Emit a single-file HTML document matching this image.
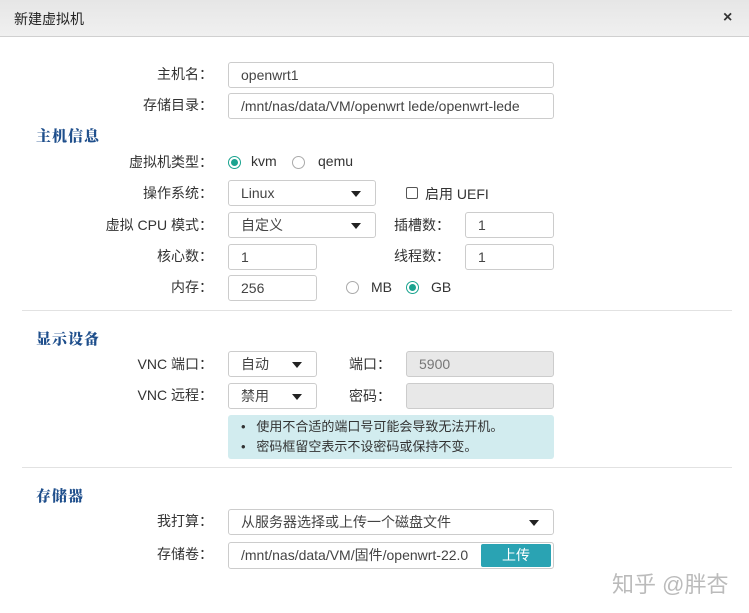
<!DOCTYPE html>
<html><head><meta charset="utf-8"><style>
*{box-sizing:border-box;margin:0;padding:0}
body{width:749px;height:613px;background:#fff;position:relative;overflow:hidden;font-family:"Liberation Sans","Noto Sans CJK SC",sans-serif;font-size:14px;color:#333}
.hdr{position:absolute;left:0;top:0;width:749px;height:37px;background:linear-gradient(#e6e6e6,#f0f0f0);border-bottom:1px solid #d0d0d0}
.hdr .t{position:absolute;left:14px;top:9px;font-size:14px;color:#222}
.hdr .x{position:absolute;left:723px;top:9px;font-size:16px;font-weight:bold;color:#333}
.a{position:absolute}
.lbl{position:absolute;text-align:right;width:200px;left:13px;line-height:20px}
.in{position:absolute;border:1px solid #ccc;border-radius:3px;background:#fff;padding-left:12px;line-height:24px;color:#444;white-space:nowrap;overflow:hidden}
.in.g{background:#e8e8e8;color:#777}
.sel::after{content:"";position:absolute;right:14px;top:10px;border-left:5px solid transparent;border-right:5px solid transparent;border-top:6px solid #222}
.sec{position:absolute;left:36px;font-family:"Noto Serif CJK SC",serif;font-weight:900;color:#1f4f8c;font-size:15px;letter-spacing:1px}
.hr{position:absolute;left:22px;width:710px;height:1px;background:#e2e2e2}
.r{position:absolute;width:13px;height:13px;border:1px solid #aaa;border-radius:50%}
.r.on{border-color:#1aa38f}
.r.on::after{content:"";position:absolute;left:2px;top:2px;width:7px;height:7px;border-radius:50%;background:#1aa38f}
</style></head><body>
<div class="hdr"><span class="t">新建虚拟机</span><span class="x">×</span></div>

<div class="lbl" style="top:64px">主机名：</div>
<div class="in" style="left:228px;top:62px;width:326px;height:26px">openwrt1</div>
<div class="lbl" style="top:95px">存储目录：</div>
<div class="in" style="left:228px;top:93px;width:326px;height:26px">/mnt/nas/data/VM/openwrt lede/openwrt-lede</div>

<div class="sec" style="top:125px">主机信息</div>
<div class="lbl" style="top:152px">虚拟机类型：</div>
<div class="r on" style="left:228px;top:156px"></div><span class="a" style="left:251px;top:153px">kvm</span>
<div class="r" style="left:292px;top:156px"></div><span class="a" style="left:318px;top:153px">qemu</span>

<div class="lbl" style="top:183px">操作系统：</div>
<div class="in sel" style="left:228px;top:180px;width:148px;height:26px">Linux</div>
<div class="a" style="left:406px;top:187px;width:12px;height:12px;border:1px solid #555;border-radius:2px"></div>
<span class="a" style="left:425px;top:184px">启用 UEFI</span>

<div class="lbl" style="top:215px">虚拟 CPU 模式：</div>
<div class="in sel" style="left:228px;top:212px;width:148px;height:26px">自定义</div>
<div class="lbl" style="top:215px;left:250px">插槽数：</div>
<div class="in" style="left:465px;top:212px;width:89px;height:26px">1</div>

<div class="lbl" style="top:246px">核心数：</div>
<div class="in" style="left:228px;top:244px;width:89px;height:26px">1</div>
<div class="lbl" style="top:246px;left:250px">线程数：</div>
<div class="in" style="left:465px;top:244px;width:89px;height:26px">1</div>

<div class="lbl" style="top:277px">内存：</div>
<div class="in" style="left:228px;top:275px;width:89px;height:26px">256</div>
<div class="r" style="left:346px;top:281px"></div><span class="a" style="left:371px;top:279px">MB</span>
<div class="r on" style="left:406px;top:281px"></div><span class="a" style="left:431px;top:279px">GB</span>

<div class="hr" style="top:310px"></div>
<div class="sec" style="top:328px">显示设备</div>
<div class="lbl" style="top:354px">VNC 端口：</div>
<div class="in sel" style="left:228px;top:351px;width:89px;height:26px">自动</div>
<span class="a" style="left:349px;top:354px">端口：</span>
<div class="in g" style="left:406px;top:351px;width:148px;height:26px">5900</div>
<div class="lbl" style="top:385px">VNC 远程：</div>
<div class="in sel" style="left:228px;top:383px;width:89px;height:26px">禁用</div>
<span class="a" style="left:349px;top:386px">密码：</span>
<div class="in g" style="left:406px;top:383px;width:148px;height:26px"></div>
<div class="a" style="left:228px;top:415px;width:326px;height:44px;background:#d2ecef;border-radius:3px;font-size:13px;line-height:20px;padding:2px 0 0 13px;color:#333">
<div>•&nbsp;&nbsp;&nbsp;使用不合适的端口号可能会导致无法开机。</div>
<div>•&nbsp;&nbsp;&nbsp;密码框留空表示不设密码或保持不变。</div></div>

<div class="hr" style="top:467px"></div>
<div class="sec" style="top:485px">存储器</div>
<div class="lbl" style="top:511px">我打算：</div>
<div class="in sel" style="left:228px;top:509px;width:326px;height:26px">从服务器选择或上传一个磁盘文件</div>
<div class="lbl" style="top:544px">存储卷：</div>
<div class="in" style="left:228px;top:542px;width:326px;height:27px;padding-left:12px">/mnt/nas/data/VM/固件/openwrt-22.0</div>
<div class="a" style="left:481px;top:544px;width:70px;height:23px;background:#2aa3b3;color:#fff;text-align:center;line-height:23px;border-radius:2px">上传</div>

<div class="a" style="left:612px;top:567px;font-size:22px;color:#bbb">知乎 @胖杏</div>
</body></html>
